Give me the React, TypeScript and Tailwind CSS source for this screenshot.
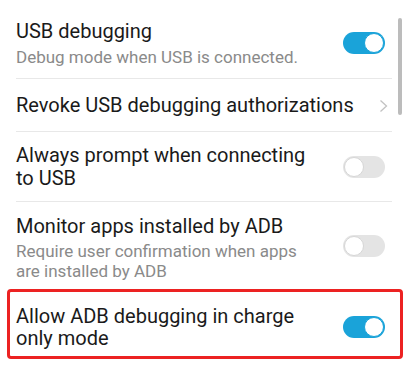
import React from 'react'

function Toggle({ on }: { on: boolean }) {
  return (
    <div
      className={`relative w-[42px] h-[22px] rounded-full shrink-0 ${on ? 'bg-[#1aa3d9]' : 'bg-[#e4e4e4]'}`}
    >
      <div
        className={`absolute top-[1px] w-[20px] h-[20px] rounded-full bg-white border ${
          on ? 'right-[1px] border-[#1aa3d9]' : 'left-[1px] border-[#d6d6d6]'
        }`}
      />
    </div>
  )
}

function Divider() {
  return <div className="h-px bg-[#e8e8e8] ml-4 mr-[15px]" />
}

export default function App() {
  return (
    <div className="relative w-[407px] h-[367px] bg-white overflow-hidden font-['Roboto',sans-serif] text-[#1a1a1a]">
      {/* scrollbar */}
      <div className="absolute left-[398px] top-[18px] w-[4px] h-[97px] rounded-sm bg-[#bcbcbc]" />

      <div className="flex items-start justify-between h-[78px] pl-4 pr-[22px] pt-[18px]">
        <div>
          <div className="text-[20px] leading-[26px]">USB debugging</div>
          <div className="text-[17px] leading-[22px] mt-[2px] text-[#8a8a8a]">
            Debug mode when USB is connected.
          </div>
        </div>
        <div className="mt-[14px]">
          <Toggle on />
        </div>
      </div>
      <Divider />

      <div className="flex items-center justify-between h-[52px] pl-4 pr-[19px]">
        <div className="text-[20px] leading-[24px]">Revoke USB debugging authorizations</div>
        <svg width="9" height="14" viewBox="0 0 9 14" className="mt-[2px]">
          <polyline points="1.5,1.5 7.5,7 1.5,12.5" fill="none" stroke="#c2c2c2" strokeWidth="1.3" />
        </svg>
      </div>
      <Divider />

      <div className="flex items-center justify-between h-[69px] pl-4 pr-[22px]">
        <div className="text-[20px] leading-[23px] w-[300px]">
          Always prompt when connecting to USB
        </div>
        <Toggle on={false} />
      </div>
      <Divider />

      <div className="flex items-start justify-between h-[87px] pl-4 pr-[22px] pt-3">
        <div>
          <div className="text-[20px] leading-[24px]">Monitor apps installed by ADB</div>
          <div className="text-[17px] leading-[20px] mt-[3px] text-[#8a8a8a] w-[292px]">
            Require user confirmation when apps are installed by ADB
          </div>
        </div>
        <div className="mt-[21px]">
          <Toggle on={false} />
        </div>
      </div>

      <div className="ml-[7px] mr-[4px] h-[70px] border-[3px] border-[#ec2222] rounded-[4px] flex items-center justify-between pl-[6px] pr-[15px] pt-[6px]">
        <div className="text-[20px] leading-[22px] w-[300px]">
          Allow ADB debugging in charge only mode
        </div>
        <Toggle on />
      </div>
    </div>
  )
}
